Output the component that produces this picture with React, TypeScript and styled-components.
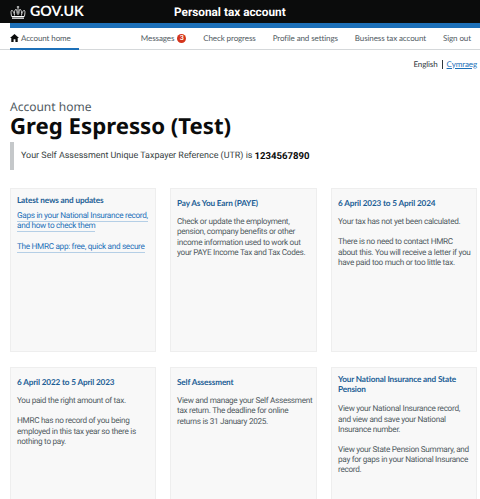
import React from "react";
import styled, { createGlobalStyle } from "styled-components";

const Global = createGlobalStyle`
  html, body { margin: 0; padding: 0; background: #fff; overflow: hidden; }
  body {
    font-family: Roboto, "Liberation Sans", Arial, sans-serif;
    color: #0b0c0c;
    text-rendering: geometricPrecision;
  }
`;

const Page = styled.div`
  width: 480px;
  height: 499px;
  overflow: hidden;
`;
const Header = styled.header`
  height: 23px;
  background: #0b0c0c;
  display: flex;
  align-items: center;
  padding-left: 10px;
`;
const Brand = styled.div`
  display: flex;
  align-items: center;
  gap: 4px;
  width: 164px;
  color: #fff;
  font-family: Lato, sans-serif;
  font-size: 14.2px;
  font-weight: 700;
`;
const ServiceName = styled.div`
  color: #fff;
  font-size: 11.8px;
  font-weight: 700;
`;
const BlueBar = styled.div`
  height: 5px;
  margin-left: 10px;
  background: #1d70b8;
`;
const Nav = styled.nav`
  height: 21px;
  border-bottom: 1px solid #d5d8da;
  padding: 0 9px 0 10px;
  display: flex;
  align-items: stretch;
  gap: 17px;
`;
const NavItem = styled.a<{ $active?: boolean }>`
  display: flex;
  align-items: center;
  gap: 2px;
  white-space: nowrap;
  font-family: Lato, sans-serif;
  font-size: 8px;
  letter-spacing: -0.1px;
  color: #505a5f;
  margin-bottom: -1px;
  width: ${p => (p.$active ? "69px" : "auto")};
  margin-right: ${p => (p.$active ? "auto" : "0")};
  border-bottom: 2px solid ${p => (p.$active ? "#1d70b8" : "transparent")};
`;
const Badge = styled.span`
  width: 9px;
  height: 9px;
  margin-left: 1px;
  border-radius: 50%;
  background: #d4351c;
  color: #fff;
  font-size: 7px;
  font-weight: 700;
  display: inline-flex;
  align-items: center;
  justify-content: center;
`;
const Lang = styled.div`
  display: flex;
  justify-content: flex-end;
  align-items: center;
  gap: 4px;
  padding: 8px 3px 0 0;
  height: 12px;
  font-family: Lato, sans-serif;
  font-size: 8px;
  letter-spacing: -0.1px;
  color: #30383c;
`;
const LangLink = styled.a`
  color: #1d70b8;
  text-decoration: underline;
  border-left: 1px solid #30383c;
  padding-left: 4px;
  line-height: 9px;
`;
const Main = styled.main`
  padding: 30px 3px 0 10px;
`;
const Caption = styled.div`
  font-family: "Noto Sans", sans-serif;
  font-size: 12px;
  line-height: 13px;
  color: #505a5f;
`;
const Title = styled.h1`
  margin: 0;
  font-family: "Noto Sans", sans-serif;
  font-size: 22.2px;
  line-height: 26px;
  font-weight: 700;
`;
const Inset = styled.div`
  margin-top: 3px;
  height: 28px;
  border-left: 4px solid #c5c8ca;
  padding-left: 7px;
  display: flex;
  align-items: center;
  font-size: 8.95px;
  color: #383f43;
  b { margin-left: 2px; color: #0b0c0c; font-size: 9.6px; }
`;
const Grid = styled.div`
  margin-top: 18px;
  display: grid;
  grid-template-columns: 146px 147px 146px;
  grid-auto-rows: 164px;
  column-gap: 14px;
  row-gap: 15px;
`;
const Card = styled.section`
  box-sizing: border-box;
  background: #f8f8f8;
  border: 1px solid #eeeeee;
  padding: 6px 4px 0 6px;
`;
const CardTitle = styled.h2<{ $tight?: boolean }>`
  margin: 0 0 ${p => (p.$tight ? "6px" : "9px")};
  padding-top: ${p => (p.$tight ? "0" : "3px")};
  font-family: Lato, sans-serif;
  font-size: 8.2px;
  letter-spacing: -0.15px;
  line-height: 10.2px;
  font-weight: 700;
  color: #1d5f96;
`;
const Para = styled.p<{ $lead?: boolean }>`
  margin: ${p => (p.$lead ? "10px" : "0")} 0 10px;
  font-size: 8.2px;
  letter-spacing: -0.3px;
  line-height: 10.2px;
  color: #505a5f;
`;
const NoWrap = styled.span`
  white-space: nowrap;
`;
const NewsLink = styled.a`
  display: block;
  margin: 0 0 10px;
  font-size: 8.2px;
  letter-spacing: -0.3px;
  line-height: 10.2px;
  color: #1d70b8;
  span { border-bottom: 1px solid #b5cfe6; }
`;

const Crown = () => (
  <svg width="16" height="14" viewBox="0 0 16 14" fill="none" stroke="#fff" strokeWidth="0.8">
    <path d="M1.5 11 C1 8 .8 6.5 1.5 5.5 C3 5.5 3.8 7 4 8.5 M14.5 11 C15 8 15.2 6.5 14.5 5.5 C13 5.5 12.2 7 12 8.5" />
    <path d="M4.5 10.5 C4 8 4.5 5 6 4.2 C7 5.5 7 7 7 8.5 M11.5 10.5 C12 8 11.5 5 10 4.2 C9 5.5 9 7 9 8.5" />
    <path d="M8 1 V4 M6.8 2 H9.2 M8 4 V10" />
    <path d="M1.5 11.5 H14.5 M2 13.2 H14" strokeWidth="1.2" />
  </svg>
);
const Home = () => (
  <svg width="9" height="8" viewBox="0 0 9 8" fill="#0b0c0c">
    <path d="M4.5 0 L9 4 H7.7 V8 H5.4 V5.2 H3.6 V8 H1.3 V4 H0 Z" />
  </svg>
);

export default function App() {
  return (
    <Page>
      <Global />
      <Header>
        <Brand><Crown />GOV.UK</Brand>
        <ServiceName>Personal tax account</ServiceName>
      </Header>
      <BlueBar />
      <Nav>
        <NavItem $active><Home />Account home</NavItem>
        <NavItem>Messages<Badge>3</Badge></NavItem>
        <NavItem>Check progress</NavItem>
        <NavItem>Profile and settings</NavItem>
        <NavItem>Business tax account</NavItem>
        <NavItem>Sign out</NavItem>
      </Nav>
      <Lang>English<LangLink>Cymraeg</LangLink></Lang>
      <Main>
        <Caption>Account home</Caption>
        <Title>Greg Espresso (Test)</Title>
        <Inset>Your Self Assessment Unique Taxpayer Reference (UTR) is <b>1234567890</b></Inset>
        <Grid>
          <Card>
            <CardTitle $tight>Latest news and updates</CardTitle>
            <NewsLink><span>Gaps in your National Insurance record,</span><br /><span>and how to check them</span></NewsLink>
            <NewsLink><span>The HMRC app: free, quick and secure</span></NewsLink>
          </Card>
          <Card>
            <CardTitle>Pay As You Earn (PAYE)</CardTitle>
            <Para>Check or update the employment, pension, company benefits or other income information used to work out your PAYE Income Tax and Tax Codes.</Para>
          </Card>
          <Card>
            <CardTitle>6 April 2023 to 5 April 2024</CardTitle>
            <Para>Your tax has not yet been calculated.</Para>
            <Para>There is no need to contact HMRC about this. You will receive a letter if you have paid too much or too little tax.</Para>
          </Card>
          <Card>
            <CardTitle>6 April 2022 to 5 April 2023</CardTitle>
            <Para>You paid the right amount of tax.</Para>
            <Para>HMRC has no record of you being employed in this tax year so there is nothing to pay.</Para>
          </Card>
          <Card>
            <CardTitle>Self Assessment</CardTitle>
            <Para><NoWrap>View and manage your Self Assessment</NoWrap><br />tax return. The deadline for online<br />returns is 31 January 2025.</Para>
          </Card>
          <Card>
            <CardTitle $tight>Your National Insurance and State Pension</CardTitle>
            <Para $lead>View your National Insurance record, and view and save your National Insurance number.</Para>
            <Para>View your State Pension Summary, and pay for gaps in your National Insurance record.</Para>
          </Card>
        </Grid>
      </Main>
    </Page>
  );
}
